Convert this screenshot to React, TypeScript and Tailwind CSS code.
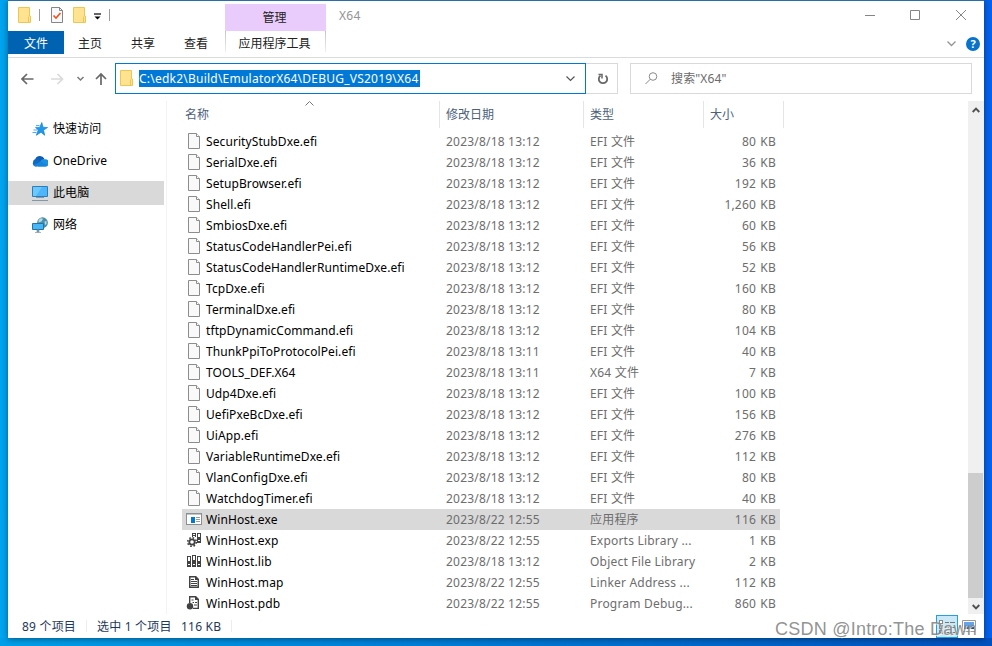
import React, { useState } from "react";

type FileKind = "file" | "exe" | "exp" | "lib" | "map" | "pdb";

interface FileItem {
  name: string;
  date: string;
  type: string;
  size: string;
  kind: FileKind;
}

const efi = (name: string, size: string, time = "13:12"): FileItem => ({
  name,
  date: "2023/8/18 " + time,
  type: "EFI 文件",
  size,
  kind: "file",
});

const files: FileItem[] = [
  efi("SecurityStubDxe.efi", "80 KB"),
  efi("SerialDxe.efi", "36 KB"),
  efi("SetupBrowser.efi", "192 KB"),
  efi("Shell.efi", "1,260 KB"),
  efi("SmbiosDxe.efi", "60 KB"),
  efi("StatusCodeHandlerPei.efi", "56 KB"),
  efi("StatusCodeHandlerRuntimeDxe.efi", "52 KB"),
  efi("TcpDxe.efi", "160 KB"),
  efi("TerminalDxe.efi", "80 KB"),
  efi("tftpDynamicCommand.efi", "104 KB"),
  efi("ThunkPpiToProtocolPei.efi", "40 KB", "13:11"),
  { name: "TOOLS_DEF.X64", date: "2023/8/18 13:11", type: "X64 文件", size: "7 KB", kind: "file" },
  efi("Udp4Dxe.efi", "100 KB"),
  efi("UefiPxeBcDxe.efi", "156 KB"),
  efi("UiApp.efi", "276 KB"),
  efi("VariableRuntimeDxe.efi", "112 KB"),
  efi("VlanConfigDxe.efi", "80 KB"),
  efi("WatchdogTimer.efi", "40 KB"),
  { name: "WinHost.exe", date: "2023/8/22 12:55", type: "应用程序", size: "116 KB", kind: "exe" },
  { name: "WinHost.exp", date: "2023/8/22 12:55", type: "Exports Library ...", size: "1 KB", kind: "exp" },
  { name: "WinHost.lib", date: "2023/8/18 13:12", type: "Object File Library", size: "2 KB", kind: "lib" },
  { name: "WinHost.map", date: "2023/8/22 12:55", type: "Linker Address ...", size: "112 KB", kind: "map" },
  { name: "WinHost.pdb", date: "2023/8/22 12:55", type: "Program Debug...", size: "860 KB", kind: "pdb" },
];

const FolderIcon = ({ className = "" }: { className?: string }) => (
  <svg width="14" height="16" viewBox="0 0 14 16" className={"shrink-0 " + className}>
    <path d="M.5.5h11v8.500h1v6.500H.5z" fill="#ffe391" stroke="#edc655" />
    <path d="M10.500 9.500v5.500" stroke="#edc655" />
  </svg>
);

const FileIcon = ({ kind }: { kind: FileKind }) => {
  if (kind === "exe") {
    return (
      <svg width="16" height="16" viewBox="0 0 16 16" shapeRendering="crispEdges">
        <path d="M.5 2.500h15v11H.5z" fill="#fff" stroke="#8a8f94" />
        <path d="M1 3h14v1H1z" fill="#c2c6ca" />
        <path d="M5 6h4v6H5z" fill="#0078d7" />
        <path d="M10 6.500h4M10 8.500h4M10 10.500h4" stroke="#9a9a9a" />
      </svg>
    );
  }
  if (kind === "exp") {
    return (
      <svg width="16" height="16" viewBox="0 0 16 16">
        <circle cx="6" cy="10" r="2.700" fill="none" stroke="#424242" strokeWidth="1.800" />
        <circle cx="6" cy="10" r="4.300" fill="none" stroke="#424242" strokeWidth="1.600" strokeDasharray="1.700 1.677" />
        <path
          d="M6 1h4v4H9V4H7v1H6zM11 1h4v10h-4zM12 2v3h2V2zM12 8v1h2V8zM7 2v1h2V2z"
          fill="#424242"
          fillRule="evenodd"
        />
      </svg>
    );
  }
  if (kind === "lib") {
    return (
      <svg width="16" height="16" viewBox="0 0 16 16" shapeRendering="crispEdges">
        <path
          d="M1 3h4v11H1zM6 2h4v12H6zM11 3h4v11h-4zM2 4v4h2V4zM7 3v4h2V3zM12 4v4h2V4zM2 11v1h2v-1zM7 11v1h2v-1zM12 11v1h2v-1z"
          fill="#424242"
          fillRule="evenodd"
        />
      </svg>
    );
  }
  if (kind === "map") {
    return (
      <svg width="16" height="16" viewBox="0 0 16 16">
        <path d="M3.750 2.750h6l2.500 2.500v8h-8.500z" fill="#fff" stroke="#424242" strokeWidth="1.500" />
        <path d="M9 2v4h4" fill="#424242" />
        <path d="M5 5.500h3M5 7.500h6M5 9.500h6M5 11.500h6" stroke="#424242" />
      </svg>
    );
  }
  if (kind === "pdb") {
    return (
      <svg width="16" height="16" viewBox="0 0 16 16">
        <path d="M3.700 8V1.700h6l2.600 2.600v9.100H7" fill="#fff" stroke="#424242" strokeWidth="1.400" />
        <path d="M9 1v4h4" fill="#424242" />
        <path d="M5.500 5h2M6.500 7.500h1.500M9 7.500h2M8 10h3" stroke="#424242" />
        <circle cx="4" cy="11.300" r="3.200" fill="#424242" />
      </svg>
    );
  }
  return (
    <svg width="16" height="16" viewBox="0 0 16 16">
      <path d="M2.500.5h8l3 3v12h-11z" fill="#f9f9f9" stroke="#8c8c8c" />
      <path d="M10.500.5v3h3" fill="#fff" stroke="#8c8c8c" />
    </svg>
  );
};

const StarIcon = () => (
  <svg width="16" height="16" viewBox="0 0 16 16">
    <path d="M9.800 1.500l1.200 4.700 4.500.3-4 2.600 1.200 5.200-3.700-3.100-4.700 3.100 2-5.200-2.800-2.700h4.200z" fill="#1f98ea" stroke="#1583d0" strokeWidth=".7" />
    <path d="M4 4.500h3.500M1.500 9h4M.5 11.500h4" stroke="#49aeea" />
  </svg>
);

const CloudIcon = () => (
  <svg width="16" height="16" viewBox="0 0 16 16">
    <path d="M3 7a5 5 0 0 1 9.300-1.500L9 11z" fill="#0f5cb5" />
    <path d="M3.700 13.500A3.700 3.700 0 1 1 5.500 6.300L13 11z" fill="#1269c4" />
    <path d="M8 9a4.200 4.200 0 0 1 5-2.700 3.600 3.600 0 0 1 .5 7.200H6z" fill="#1b90e0" />
    <path d="M1.500 12L9 8.500l6.300 4a3 3 0 0 1-1.800 1H3.700A3.400 3.400 0 0 1 1.500 12z" fill="#1684da" />
  </svg>
);

const PcIcon = () => (
  <svg width="16" height="16" viewBox="0 0 16 16">
    <path d="M.5 1.500h15v10H.5z" fill="#4db5fb" stroke="#2b7fb8" />
    <path d="M1 2h9L4 11H1z" fill="#6cc8ff" />
    <path d="M4 12.500h8M0 15.500h16" stroke="#8197ac" />
  </svg>
);

const NetworkIcon = () => (
  <svg width="16" height="16" viewBox="0 0 16 16">
    <circle cx="10.500" cy="5.700" r="5.400" fill="#4a8dac" />
    <path d="M6.500 3.500c1.500-3 4-2.500 4.500-1.500l-1.500 2.500-3 1zM12.500 4.500l2-.5v3l-1.500 1z" fill="#b5dbe6" />
    <path d="M.5 6.500h11v6H.5z" fill="#45b6f8" stroke="#28719f" />
    <path d="M5 13h2v2H5zM3 15.500h6" fill="#7997ad" stroke="#7997ad" strokeWidth=".7" />
  </svg>
);

const navItems = [
  { label: "快速访问", icon: <StarIcon /> },
  { label: "OneDrive", icon: <CloudIcon /> },
  { label: "此电脑", icon: <PcIcon /> },
  { label: "网络", icon: <NetworkIcon /> },
];

const TitleBar = () => (
  <div className="flex h-[30px] shrink-0">
    <div className="flex h-[30px] w-[217px] items-center pb-[2px] pl-[10px]">
      <FolderIcon />
      <div className="ml-[7px] h-3 w-px bg-[#9b9b9b]" />
      <svg width="12" height="16" viewBox="0 0 12 16" className="ml-[11px]">
        <path d="M.5.5h8l3 3v12H.5z" fill="#f7f8fa" stroke="#858585" />
        <path d="M8.500.5v3h3" fill="none" stroke="#858585" />
        <path d="M2.500 8.500L5 11l4.500-5" fill="none" stroke="#e8541d" strokeWidth="1.600" />
      </svg>
      <FolderIcon className="ml-[10px]" />
      <svg width="8" height="8" viewBox="0 0 8 8" className="ml-[7px] mt-[3px]">
        <path d="M0 1h7" stroke="#000" strokeWidth="1.200" />
        <path d="M.5 3.500h6l-3 3z" fill="#000" />
      </svg>
      <div className="ml-[7px] h-3 w-px bg-[#9b9b9b]" />
    </div>
    <div className="mt-[3px] flex h-[27px] w-[101px] items-center justify-center bg-[#eaccfc] pr-[2px] text-[#222]">
      管理
    </div>
    <div className="ml-[13px] flex items-center tracking-[0.300px] text-[#949494]">X64</div>
    <div className="ml-auto flex items-center pb-[2px] pr-[17px]">
      <svg width="102" height="12" viewBox="0 0 102 12" fill="none" stroke="#858585">
        <path d="M0 6.500h10M45.500 1.500h9v9h-9zM91 1l10 10M101 1L91 11" />
      </svg>
    </div>
  </div>
);

const RibbonTabs = () => (
  <div className="flex h-[27px] shrink-0 border-b border-[#dadbdc] text-[#222]">
    <div className="flex h-[23px] w-[56px] items-center justify-center bg-[#0063b1] pt-[2px] text-white">文件</div>
    <div className="ml-[14px] flex h-[23px] items-center pt-[2px]">主页</div>
    <div className="ml-[29px] flex h-[23px] items-center pt-[2px]">共享</div>
    <div className="ml-[29px] flex h-[23px] items-center pt-[2px]">查看</div>
    <div className="ml-[17px] flex h-[21px] w-[101px] justify-between">
      <div className="w-px bg-linear-to-b from-[#c4c4c4] to-[#eeeeee]" />
      <span className="pr-[2px] pt-[5px]">应用程序工具</span>
      <div className="w-px bg-linear-to-b from-[#c4c4c4] to-[#eeeeee]" />
    </div>
    <div className="ml-auto flex h-[26px] items-center pr-1">
      <svg width="9" height="6" viewBox="0 0 9 6" className="mr-[10px]">
        <path d="M.5.5l4 4 4-4" fill="none" stroke="#949494" strokeWidth="1.300" />
      </svg>
      <span className="flex h-[14px] w-[14px] items-center justify-center rounded-full bg-[#0873ca] text-[11px] font-bold text-white">
        ?
      </span>
    </div>
  </div>
);

const AddressBar = () => (
  <div className="flex h-[43px] shrink-0 items-start pt-[5px]">
    <div className="flex h-[31px] w-[107px] items-center pl-[13px]">
      <svg width="88" height="14" viewBox="0 0 88 14" fill="none" strokeWidth="1.700">
        <path d="M1 7h11.500M6 2L1 7l5 5" stroke="#686868" />
        <path d="M30 7h11.500M36.500 2l5 5-5 5" stroke="#dadada" />
        <path d="M56.500 5l3 3 3-3" stroke="#7b7b7b" strokeWidth="1.500" />
        <path d="M80 13V2M75 7l5-5 5 5" stroke="#686868" />
      </svg>
    </div>
    <div className="flex h-[31px] w-[471px] items-center border border-[#0078d7] pb-px pl-1">
      <FolderIcon />
      <span className="ml-[5px] mt-px h-[17px] w-[281px] whitespace-nowrap bg-[#0078d7] leading-[17px] text-white">
        <span className="tracking-[0.230px]">C:\edk2\Build\EmulatorX64\DEBUG_VS2019\X64</span>
      </span>
      <svg width="9" height="6" viewBox="0 0 9 6" className="ml-auto mr-[10px] mt-px">
        <path d="M.5.5l4 4 4-4" fill="none" stroke="#555" strokeWidth="1.200" />
      </svg>
    </div>
    <div className="flex h-[31px] w-[32px] items-center justify-center border border-l-0 border-[#d9d9d9] pl-[2px]">
      <svg width="12" height="12" viewBox="0 0 12 12" fill="none" stroke="#686868" strokeWidth="1.800">
        <path d="M8.500 2.600A4.200 4.200 0 1 1 3.500 2.600" />
        <path d="M1.500 1.500H5v4" strokeWidth="1.500" />
      </svg>
    </div>
    <div className="ml-3 flex h-[31px] w-[342px] items-center border border-[#d9d9d9] text-[#6b6b6b]">
      <svg width="13" height="13" viewBox="0 0 13 13" fill="none" stroke="#8a8a8a" className="ml-[14px]">
        <circle cx="8" cy="4.500" r="3.800" />
        <path d="M5.200 7.300L.5 12" />
      </svg>
      <span className="ml-[13px] tracking-[0.150px]">搜索"X64"</span>
    </div>
  </div>
);

const ScrollBar = () => (
  <div className="flex w-4 shrink-0 flex-col bg-[#f0f0f0]">
    <div className="flex h-[17px] items-center justify-center">
      <svg width="8" height="6" viewBox="0 0 8 6">
        <path d="M.7 5L4 1.700 7.300 5" fill="none" stroke="#505050" strokeWidth="1.900" />
      </svg>
    </div>
    <div className="mt-auto h-[125px] w-[15px] bg-[#cdcdcd]" />
    <div className="flex h-4 items-center justify-center pt-[2px]">
      <svg width="8" height="6" viewBox="0 0 8 6">
        <path d="M.7 1L4 4.300 7.300 1" fill="none" stroke="#505050" strokeWidth="1.900" />
      </svg>
    </div>
  </div>
);

const App = () => {
  const [selected, setSelected] = useState<string>("WinHost.exe");
  const [activeNav, setActiveNav] = useState<string>("此电脑");

  return (
    <div className="relative h-[646px] w-[992px] overflow-hidden bg-linear-to-r from-[#00a4ef] to-[#0562ed] font-['Noto_Sans','Noto_Sans_CJK_SC',sans-serif] text-[12px] leading-[16px]">
      <div className="absolute inset-x-0 bottom-0 h-2 bg-linear-to-r from-[#009fe9] to-[#0050be]" />
      <div className="relative ml-2 flex h-[638px] w-[976px] flex-col border-t border-[#2a6ea8] bg-white shadow-[0_1px_6px_rgba(0,0,0,0.450)]">
        <TitleBar />
        <RibbonTabs />
        <AddressBar />

        <div className="flex h-[513px] shrink-0">
          {/* navigation pane */}
          <div className="flex w-[159px] shrink-0 flex-col gap-2 border-r border-[#f3f3f3] pt-4">
            {navItems.map((item) => (
              <div
                key={item.label}
                onClick={() => setActiveNav(item.label)}
                className={`flex h-6 w-[156px] items-center pl-6 ${activeNav === item.label ? "bg-[#d9d9d9]" : ""}`}
              >
                {item.icon}
                <span className="ml-[5px] tracking-[0.100px]">{item.label}</span>
              </div>
            ))}
          </div>

          {/* file list */}
          <div className="flex-1">
            <div className="flex h-[27px] items-center text-[#4c607a]">
              <div className="relative flex h-full w-[273px] items-center border-r border-[#e5e5e5] pl-[18px] pt-px">
                名称
                <svg width="9" height="5" viewBox="0 0 9 5" className="absolute left-[138px] top-0">
                  <path d="M.5 4.500l4-4 4 4" fill="none" stroke="#777" />
                </svg>
              </div>
              <div className="flex h-full w-[144px] items-center border-r border-[#e5e5e5] pl-[6px] pt-px">修改日期</div>
              <div className="flex h-full w-[120px] items-center border-r border-[#e5e5e5] pl-[6px] pt-px">类型</div>
              <div className="flex h-full w-[80px] items-center border-r border-[#e5e5e5] pl-[6px] pt-px">大小</div>
            </div>
            <div className="ml-[15px] mt-[3px] w-[598px]">
              {files.map((file) => (
                <div
                  key={file.name}
                  onClick={() => setSelected(file.name)}
                  className={`flex h-[21px] items-center whitespace-nowrap text-[#6d6d6d] ${selected === file.name ? "bg-[#d9d9d9]" : ""}`}
                >
                  <div className="flex w-[264px] items-center pl-1 text-black">
                    <span className="-mt-px mb-px">
                      <FileIcon kind={file.kind} />
                    </span>
                    <span className="ml-1 tracking-[0.090px]">{file.name}</span>
                  </div>
                  <div className="w-[144px] tracking-[0.200px]">{file.date}</div>
                  <div className="w-[120px] tracking-[0.200px]">{file.type}</div>
                  <div className="w-[66px] text-right tracking-[0.200px] [word-spacing:1px]">{file.size}</div>
                </div>
              ))}
            </div>
          </div>
          <ScrollBar />
        </div>

        {/* status bar */}
        <div className="flex h-6 shrink-0 items-center pl-[14px] text-[#1e395b]">
          <span className="w-[64px] pt-px tracking-[0.200px]">89 个项目</span>
          <div className="h-3 w-px bg-[#ececec]" />
          <span className="ml-[10px] w-[84px] pt-px tracking-[0.200px]">选中 1 个项目</span>
          <span className="w-[50px] pt-px tracking-[0.200px]">116 KB</span>
          <div className="h-3 w-px bg-[#ececec]" />
          <div className="ml-auto flex h-6 items-center pr-2">
            <div className="mt-px flex h-[23px] w-[22px] items-center justify-center border border-[#26a0da] bg-[#cbe8f6]">
              <svg width="16" height="14" viewBox="0 0 16 14" shapeRendering="crispEdges">
                <path d="M.5.5h3v3h-3zM.5 5.500h3v3h-3zM.5 10.500h3v3h-3z" fill="#fff" stroke="#888" />
                <path d="M1 12h2v1H1z" fill="#c8502e" />
                <path d="M6 2.500h4M11 2.500h5M6 7.500h4M11 7.500h5M6 12.500h4M11 12.500h5" stroke="#777" />
              </svg>
            </div>
            <svg width="14" height="12" viewBox="0 0 14 12" className="ml-1">
              <path d="M.5.5h13v11H.5z" fill="#fff" stroke="#999" />
              <path d="M2 2h10v7H2z" fill="#63a4ef" />
              <path d="M2 9l4-3 6 1v2z" fill="#264c7e" />
            </svg>
          </div>
        </div>
      </div>
      <div className="absolute left-[775px] top-[618px] whitespace-nowrap font-['Liberation_Sans',sans-serif] text-[18px] leading-[22px] tracking-[0.230px] text-[#858585]/90 [text-shadow:1px_1px_0_rgba(255,255,255,0.700)]">
        CSDN @Intro:The Dawn
      </div>
    </div>
  );
};

export default App;
